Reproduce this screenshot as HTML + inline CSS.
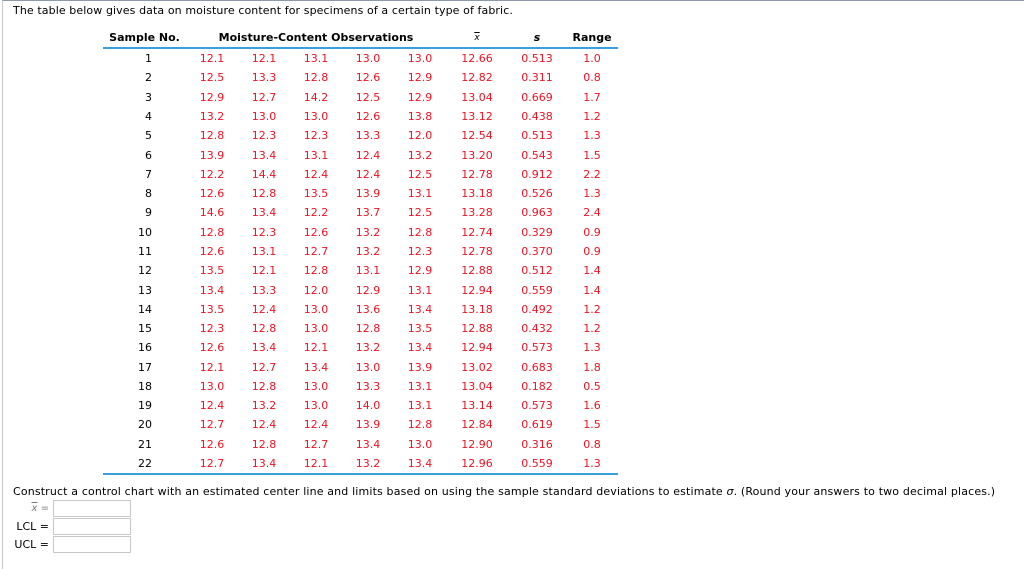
<!DOCTYPE html>
<html><head><meta charset="utf-8"><style>
html,body{margin:0;padding:0;background:#fff;width:1024px;height:569px;overflow:hidden;position:relative;font-family:Verdana,"DejaVu Sans",sans-serif;font-size:11px;color:#000}
.frame{position:absolute;left:2px;top:0;width:1022px;height:569px;border-top:1px solid #8a9aa8;border-left:1px solid #c8c8c8;box-sizing:border-box}
.t1{position:absolute;left:13px;top:4px;white-space:nowrap;letter-spacing:0.1px}
table{position:absolute;left:103px;top:29px;border-collapse:collapse;table-layout:fixed;width:515px}
td,th{padding:0;height:19.29px;text-align:center;white-space:nowrap;line-height:19px}
th{height:18px;line-height:18px;font-weight:bold;border-bottom:2px solid #3aa0db}
td{color:#ee1122}
td:first-child{color:#000;text-align:right;padding-right:34px}
tr.last td{border-bottom:2px solid #3aa0db}
.c{position:absolute;left:13px;top:485px;white-space:nowrap;letter-spacing:0.15px}
.lbl{position:absolute;width:49px;text-align:right;left:0}
.inp{position:absolute;left:53px;width:78px;height:17px;border:1px solid #c8c8c8;box-sizing:border-box}
</style></head><body>
<div class="frame"></div>
<div class="t1">The table below gives data on moisture content for specimens of a certain type of fabric.</div>
<table>
<colgroup><col style="width:83px"><col style="width:52px"><col style="width:52px"><col style="width:52px"><col style="width:52px"><col style="width:52px"><col style="width:62px"><col style="width:58px"><col style="width:52px"></colgroup>
<tr><th>Sample No.</th><th colspan="5">Moisture-Content Observations</th><th style="font-weight:normal;font-style:italic;font-size:9px"><span style="text-decoration:overline">x</span></th><th style="font-style:italic">s</th><th>Range</th></tr>
<tr><td>1</td><td>12.1</td><td>12.1</td><td>13.1</td><td>13.0</td><td>13.0</td><td>12.66</td><td>0.513</td><td>1.0</td></tr>
<tr><td>2</td><td>12.5</td><td>13.3</td><td>12.8</td><td>12.6</td><td>12.9</td><td>12.82</td><td>0.311</td><td>0.8</td></tr>
<tr><td>3</td><td>12.9</td><td>12.7</td><td>14.2</td><td>12.5</td><td>12.9</td><td>13.04</td><td>0.669</td><td>1.7</td></tr>
<tr><td>4</td><td>13.2</td><td>13.0</td><td>13.0</td><td>12.6</td><td>13.8</td><td>13.12</td><td>0.438</td><td>1.2</td></tr>
<tr><td>5</td><td>12.8</td><td>12.3</td><td>12.3</td><td>13.3</td><td>12.0</td><td>12.54</td><td>0.513</td><td>1.3</td></tr>
<tr><td>6</td><td>13.9</td><td>13.4</td><td>13.1</td><td>12.4</td><td>13.2</td><td>13.20</td><td>0.543</td><td>1.5</td></tr>
<tr><td>7</td><td>12.2</td><td>14.4</td><td>12.4</td><td>12.4</td><td>12.5</td><td>12.78</td><td>0.912</td><td>2.2</td></tr>
<tr><td>8</td><td>12.6</td><td>12.8</td><td>13.5</td><td>13.9</td><td>13.1</td><td>13.18</td><td>0.526</td><td>1.3</td></tr>
<tr><td>9</td><td>14.6</td><td>13.4</td><td>12.2</td><td>13.7</td><td>12.5</td><td>13.28</td><td>0.963</td><td>2.4</td></tr>
<tr><td>10</td><td>12.8</td><td>12.3</td><td>12.6</td><td>13.2</td><td>12.8</td><td>12.74</td><td>0.329</td><td>0.9</td></tr>
<tr><td>11</td><td>12.6</td><td>13.1</td><td>12.7</td><td>13.2</td><td>12.3</td><td>12.78</td><td>0.370</td><td>0.9</td></tr>
<tr><td>12</td><td>13.5</td><td>12.1</td><td>12.8</td><td>13.1</td><td>12.9</td><td>12.88</td><td>0.512</td><td>1.4</td></tr>
<tr><td>13</td><td>13.4</td><td>13.3</td><td>12.0</td><td>12.9</td><td>13.1</td><td>12.94</td><td>0.559</td><td>1.4</td></tr>
<tr><td>14</td><td>13.5</td><td>12.4</td><td>13.0</td><td>13.6</td><td>13.4</td><td>13.18</td><td>0.492</td><td>1.2</td></tr>
<tr><td>15</td><td>12.3</td><td>12.8</td><td>13.0</td><td>12.8</td><td>13.5</td><td>12.88</td><td>0.432</td><td>1.2</td></tr>
<tr><td>16</td><td>12.6</td><td>13.4</td><td>12.1</td><td>13.2</td><td>13.4</td><td>12.94</td><td>0.573</td><td>1.3</td></tr>
<tr><td>17</td><td>12.1</td><td>12.7</td><td>13.4</td><td>13.0</td><td>13.9</td><td>13.02</td><td>0.683</td><td>1.8</td></tr>
<tr><td>18</td><td>13.0</td><td>12.8</td><td>13.0</td><td>13.3</td><td>13.1</td><td>13.04</td><td>0.182</td><td>0.5</td></tr>
<tr><td>19</td><td>12.4</td><td>13.2</td><td>13.0</td><td>14.0</td><td>13.1</td><td>13.14</td><td>0.573</td><td>1.6</td></tr>
<tr><td>20</td><td>12.7</td><td>12.4</td><td>12.4</td><td>13.9</td><td>12.8</td><td>12.84</td><td>0.619</td><td>1.5</td></tr>
<tr><td>21</td><td>12.6</td><td>12.8</td><td>12.7</td><td>13.4</td><td>13.0</td><td>12.90</td><td>0.316</td><td>0.8</td></tr>
<tr class="last"><td>22</td><td>12.7</td><td>13.4</td><td>12.1</td><td>13.2</td><td>13.4</td><td>12.96</td><td>0.559</td><td>1.3</td></tr>
</table>
<div class="c">Construct a control chart with an estimated center line and limits based on using the sample standard deviations to estimate <i>σ</i>. (Round your answers to two decimal places.)</div>
<div class="lbl" style="top:503px;color:#777;font-size:10px"><span style="text-decoration:overline;font-style:italic">x</span> =</div>
<div class="inp" style="top:500px"></div>
<div class="lbl" style="top:520px">LCL =</div>
<div class="inp" style="top:518px"></div>
<div class="lbl" style="top:538px">UCL =</div>
<div class="inp" style="top:536px"></div>
</body></html>
